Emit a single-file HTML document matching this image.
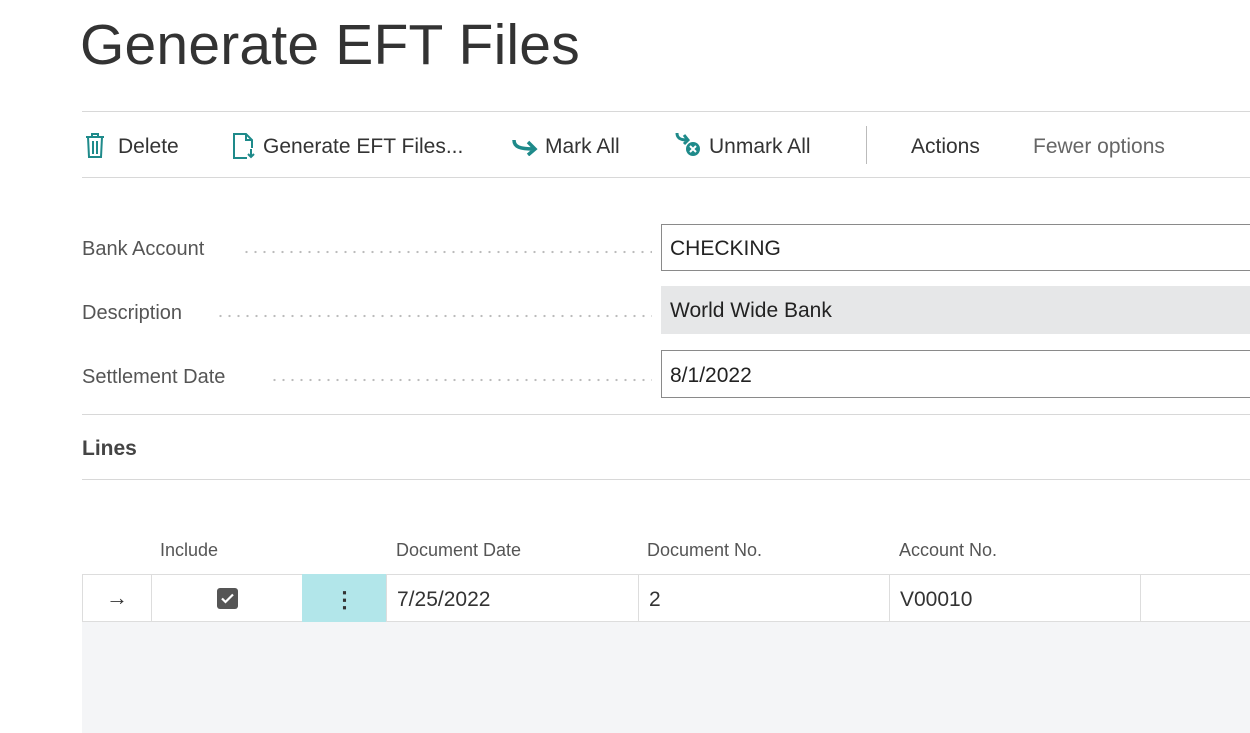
<!DOCTYPE html>
<html><head><style>
body{margin:0;width:1250px;height:733px;overflow:hidden;background:#fff;font-family:"Liberation Sans",sans-serif;position:relative;color:#333}
.a{position:absolute;white-space:nowrap}
.hr{position:absolute;left:82px;right:0;height:1px;background:#d8d8d8}
.tb{font-size:21px;color:#333;top:135px}
.lbl{font-size:20px;color:#555;left:82px}
.dots{position:absolute;right:0;top:12px;height:4px;background:radial-gradient(circle,#bbb 1px,transparent 1.3px) 0 0/9px 4px repeat-x}
.inp{position:absolute;left:661px;right:-2px;border:1px solid #8a8a8a;font-size:21px;padding-left:8px;box-sizing:border-box;color:#222}
.hd{font-size:18px;color:#555;top:540px}
.cell{position:absolute;top:574px;height:48px;border:1px solid #ddd;box-sizing:border-box;font-size:21px;line-height:50px;padding-left:10px;background:#fff}
</style></head><body>
<div class="a" style="left:80px;top:12px;font-size:57px;color:#333;letter-spacing:0.2px">Generate EFT Files</div>
<div class="hr" style="top:111px"></div>
<div class="hr" style="top:177px"></div>
<svg class="a" style="left:84px;top:133px" width="22" height="26" viewBox="0 0 22 26" fill="none" stroke="#1e8a8a" stroke-width="2"><path d="M2 4h18M8 4V1h6v3M4 4l1 20h12l1-20M9 8v13M13 8v13"/></svg>
<div class="a tb" style="left:118px">Delete</div>
<svg class="a" style="left:232px;top:132px" width="26" height="28" viewBox="0 0 26 28" fill="none" stroke="#1e8a8a" stroke-width="2"><path d="M15 26H2V2h12l6 6v8M14 2v6h6M19 17v8M16 22l3 3 3-3"/></svg>
<div class="a tb" style="left:263px">Generate EFT Files...</div>
<svg class="a" style="left:512px;top:136px" width="26" height="20" viewBox="0 0 26 20" fill="none" stroke="#1e8a8a" stroke-width="3.5"><path d="M2 4c0 7 6 9 20 9M16 6l7 7-7 6"/></svg>
<div class="a tb" style="left:545px">Mark All</div>
<svg class="a" style="left:674px;top:131px" width="30" height="28" viewBox="0 0 30 28" fill="none"><path d="M3 2c0 5 3 7 10 7M10 4l4 5-4 4" stroke="#1e8a8a" stroke-width="3"/><circle cx="19" cy="18" r="7" fill="#1e8a8a"/><path d="M16 15l6 6M22 15l-6 6" stroke="#fff" stroke-width="2"/></svg>
<div class="a tb" style="left:709px">Unmark All</div>
<div class="a" style="left:866px;top:126px;width:1px;height:38px;background:#bbb"></div>
<div class="a tb" style="left:911px">Actions</div>
<div class="a tb" style="left:1033px;color:#666">Fewer options</div>

<div class="a lbl" style="top:238px;width:570px">Bank Account<div class="dots" style="left:160px"></div></div>
<div class="a lbl" style="top:302px;width:570px">Description<div class="dots" style="left:134px"></div></div>
<div class="a lbl" style="top:366px;width:570px">Settlement Date<div class="dots" style="left:188px"></div></div>
<div class="inp" style="top:224px;height:47px;line-height:47px">CHECKING</div>
<div class="inp" style="top:286px;height:48px;line-height:50px;background:#e6e7e8;border:none;padding-left:9px">World Wide Bank</div>
<div class="inp" style="top:350px;height:48px;line-height:50px">8/1/2022</div>
<div class="hr" style="top:414px"></div>
<div class="a" style="left:82px;top:437px;font-size:21px;font-weight:bold;color:#444">Lines</div>
<div class="hr" style="top:479px"></div>

<div class="a hd" style="left:160px">Include</div>
<div class="a hd" style="left:396px">Document Date</div>
<div class="a hd" style="left:647px">Document No.</div>
<div class="a hd" style="left:899px">Account No.</div>
<div class="a" style="left:82px;top:622px;right:0;bottom:0;background:#f4f5f7"></div>
<div class="cell" style="left:82px;width:70px;text-align:center;padding:0;font-size:22px;line-height:46px">&rarr;</div>
<div class="cell" style="left:151px;width:152px;padding:0"><svg style="position:absolute;left:65px;top:13px;display:block" width="21" height="21" viewBox="0 0 21 21"><rect width="21" height="21" rx="3" fill="#555"/><path d="M5 10.5l3.5 3.5L16 6.5" stroke="#fff" stroke-width="2.2" fill="none"/></svg></div>
<div class="cell" style="left:302px;width:85px;background:#b2e6ea;border-color:#b2e6ea;text-align:center;padding:0;font-weight:bold;font-size:22px;line-height:50px">&#8942;</div>
<div class="cell" style="left:386px;width:253px">7/25/2022</div>
<div class="cell" style="left:638px;width:252px">2</div>
<div class="cell" style="left:889px;width:252px">V00010</div>
<div class="cell" style="left:1140px;width:112px"></div>
</body></html>
